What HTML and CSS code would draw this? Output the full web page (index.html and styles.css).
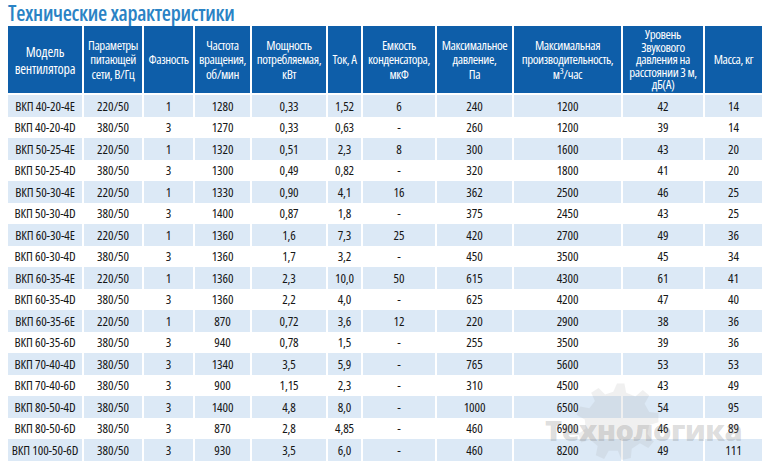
FILE: index.html
```html
<!DOCTYPE html>
<html lang="ru">
<head>
<meta charset="utf-8">
<link rel="stylesheet" href="styles.css">
</head>
<body>
<h1 class="title">Технические характеристики</h1>
<div class="wrap">
<table class="specs">
<colgroup>
<col class="c1"><col class="c2"><col class="c3"><col class="c4"><col class="c5"><col class="c6"><col class="c7"><col class="c8"><col class="c9"><col class="c10"><col class="c11">
</colgroup>
<thead>
<tr>
<th class="big">Модель<br>вентилятора</th>
<th>Параметры<br>питающей<br>сети, В/Гц</th>
<th>Фазность</th>
<th>Частота<br>вращения,<br>об/мин</th>
<th>Мощность<br>потребляемая,<br>кВт</th>
<th>Ток, А</th>
<th>Емкость<br>конденсатора,<br>мкФ</th>
<th>Максимальное<br>давление,<br>Па</th>
<th>Максимальная<br>производительность,<br>м³/час</th>
<th class="tight">Уровень<br>Звукового<br>давления на<br>расстоянии 3 м,<br>дБ(А)</th>
<th>Масса, кг</th>
</tr>
</thead>
<tbody>
<tr><td>ВКП 40-20-4E</td><td>220/50</td><td>1</td><td>1280</td><td>0,33</td><td>1,52</td><td>6</td><td>240</td><td>1200</td><td>42</td><td>14</td></tr>
<tr><td>ВКП 40-20-4D</td><td>380/50</td><td>3</td><td>1270</td><td>0,33</td><td>0,63</td><td>-</td><td>260</td><td>1200</td><td>39</td><td>14</td></tr>
<tr><td>ВКП 50-25-4E</td><td>220/50</td><td>1</td><td>1320</td><td>0,51</td><td>2,3</td><td>8</td><td>300</td><td>1600</td><td>43</td><td>20</td></tr>
<tr><td>ВКП 50-25-4D</td><td>380/50</td><td>3</td><td>1300</td><td>0,49</td><td>0,82</td><td>-</td><td>320</td><td>1800</td><td>41</td><td>20</td></tr>
<tr><td>ВКП 50-30-4E</td><td>220/50</td><td>1</td><td>1330</td><td>0,90</td><td>4,1</td><td>16</td><td>362</td><td>2500</td><td>46</td><td>25</td></tr>
<tr><td>ВКП 50-30-4D</td><td>380/50</td><td>3</td><td>1400</td><td>0,87</td><td>1,8</td><td>-</td><td>375</td><td>2450</td><td>43</td><td>25</td></tr>
<tr><td>ВКП 60-30-4E</td><td>220/50</td><td>1</td><td>1360</td><td>1,6</td><td>7,3</td><td>25</td><td>420</td><td>2700</td><td>49</td><td>36</td></tr>
<tr><td>ВКП 60-30-4D</td><td>380/50</td><td>3</td><td>1360</td><td>1,7</td><td>3,2</td><td>-</td><td>450</td><td>3500</td><td>45</td><td>34</td></tr>
<tr><td>ВКП 60-35-4E</td><td>220/50</td><td>1</td><td>1360</td><td>2,3</td><td>10,0</td><td>50</td><td>615</td><td>4300</td><td>61</td><td>41</td></tr>
<tr><td>ВКП 60-35-4D</td><td>380/50</td><td>3</td><td>1360</td><td>2,2</td><td>4,0</td><td>-</td><td>625</td><td>4200</td><td>47</td><td>40</td></tr>
<tr><td>ВКП 60-35-6E</td><td>220/50</td><td>1</td><td>870</td><td>0,72</td><td>3,6</td><td>12</td><td>220</td><td>2900</td><td>38</td><td>36</td></tr>
<tr><td>ВКП 60-35-6D</td><td>380/50</td><td>3</td><td>940</td><td>0,78</td><td>1,5</td><td>-</td><td>255</td><td>3500</td><td>39</td><td>36</td></tr>
<tr><td>ВКП 70-40-4D</td><td>380/50</td><td>3</td><td>1340</td><td>3,5</td><td>5,9</td><td>-</td><td>765</td><td>5600</td><td>53</td><td>53</td></tr>
<tr><td>ВКП 70-40-6D</td><td>380/50</td><td>3</td><td>900</td><td>1,15</td><td>2,3</td><td>-</td><td>310</td><td>4500</td><td>43</td><td>49</td></tr>
<tr><td>ВКП 80-50-4D</td><td>380/50</td><td>3</td><td>1400</td><td>4,8</td><td>8,0</td><td>-</td><td>1000</td><td>6500</td><td>54</td><td>95</td></tr>
<tr><td>ВКП 80-50-6D</td><td>380/50</td><td>3</td><td>870</td><td>2,8</td><td>4,85</td><td>-</td><td>460</td><td>6900</td><td>46</td><td>89</td></tr>
<tr><td>ВКП 100-50-6D</td><td>380/50</td><td>3</td><td>930</td><td>3,5</td><td>6,0</td><td>-</td><td>460</td><td>8200</td><td>49</td><td>111</td></tr>
</tbody>
</table>
<div class="watermark" aria-hidden="true">
<svg class="gear" viewBox="0 0 100 100" width="104" height="92">
<path d="M50 6 L58 6 L60 16 L70 20 L78 13 L85 19 L80 28 L85 37 L95 38 L95 48 L85 51 L83 61 L90 69 L84 76 L75 71 L66 77 L65 87 L55 89 L51 79 L41 79 L36 88 L27 84 L29 74 L21 67 L11 70 L8 61 L16 55 L15 45 L6 40 L10 31 L20 33 L26 25 L22 16 L30 11 L37 18 L46 15 Z" fill="#9a9a9a"/>
</svg>
<span class="wm-text">Технологика</span>
</div>
</div>
</body>
</html>
```
FILE: styles.css
```css
html, body {
  margin: 0;
  padding: 0;
  background: #ffffff;
}
body {
  padding: 2px 8px 0 8px;
  font-family: "Open Sans", "Noto Sans", sans-serif;
  color: #161616;
}
.title {
  margin: 0 0 2px 0;
  font-family: "Open Sans", "Liberation Sans Narrow", sans-serif;
  font-stretch: 75%;
  font-weight: 600;
  font-size: 21px;
  line-height: 22px;
  color: #2a83c5;
  letter-spacing: -0.3px;
}
.wrap {
  position: relative;
  width: 754px;
}
.specs {
  border-collapse: separate;
  border-spacing: 2px 0;
  margin-left: -2px;
  table-layout: fixed;
  width: 758px;
}
.c1 { width: 74px; }
.c2 { width: 58px; }
.c3 { width: 49px; }
.c4 { width: 55px; }
.c5 { width: 74px; }
.c6 { width: 33px; }
.c7 { width: 72px; }
.c8 { width: 75px; }
.c9 { width: 107px; }
.c10 { width: 80px; }
.c11 { width: 57px; }
.specs th {
  background: #0e5ea9;
  color: #ffffff;
  font-weight: 400;
  font-size: 13px;
  line-height: 14.5px;
  font-stretch: 75%;
  letter-spacing: -0.4px;
  height: 67px;
  padding: 0;
  border-bottom: 2px solid #ffffff;
  text-align: center;
  vertical-align: middle;
  white-space: nowrap;
  overflow: hidden;
}
.specs th.big {
  font-size: 14px;
  line-height: 17px;
  letter-spacing: -0.2px;
}
.specs th.tight {
  line-height: 12.5px;
}
.specs td {
  height: 21.5px;
  padding: 0;
  text-align: center;
  vertical-align: middle;
  font-size: 13px;
  font-stretch: 87.5%;
  letter-spacing: -0.1px;
  white-space: nowrap;
}
.specs tbody tr:nth-child(odd) td {
  background: #dce9f6;
}
.watermark {
  position: absolute;
  left: 527px;
  top: 352px;
  width: 200px;
  height: 92px;
  pointer-events: none;
}
.gear {
  position: absolute;
  left: 30px;
  top: 0;
  opacity: 0.14;
}
.wm-text {
  position: absolute;
  left: 10px;
  top: 42px;
  font-family: "Open Sans", sans-serif;
  font-weight: 800;
  font-size: 29px;
  line-height: 20px;
  letter-spacing: -0.5px;
  color: rgba(110, 110, 110, 0.24);
}
```
